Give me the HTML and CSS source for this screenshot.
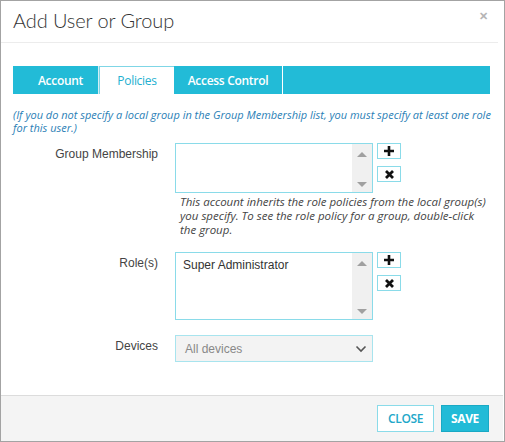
FILE: index.html
```html
<!DOCTYPE html>
<html>
<head>
<meta charset="utf-8">
<link rel="stylesheet" href="styles.css">
</head>
<body>
<div class="dialog">
  <div class="header">
    <h1 class="title">Add User or Group</h1>
    <span class="close-x">&#x2715;</span>
  </div>
  <div class="content">
    <div class="tabs">
      <div class="tab tab-account">Account</div>
      <div class="tab tab-active">Policies</div>
      <div class="tab tab-access">Access Control</div>
      <div class="tab tab-rest"></div>
    </div>
    <p class="note">(If you do not specify a local group in the Group Membership list, you must specify at least one role for this user.)</p>

    <div class="row row-group">
      <div class="label">Group Membership</div>
      <div class="control">
        <div class="listbox lb-group">
          <div class="lb-items"></div>
          <div class="scrollbar"><span class="arr up"></span><span class="arr down"></span></div>
        </div>
        <p class="hint">This account inherits the role policies from the local group(s) you specify. To see the role policy for a group, double-click the group.</p>
      </div>
      <div class="btns">
        <div class="sbtn"><svg width="12" height="12" viewBox="0 0 12 12"><path d="M6 1v10M1 6h10" stroke="#111" stroke-width="2.6"/></svg></div>
        <div class="sbtn"><svg width="11" height="11" viewBox="0 0 11 11"><path d="M2 2l7 7M9 2l-7 7" stroke="#111" stroke-width="2.8"/></svg></div>
      </div>
    </div>

    <div class="row row-role">
      <div class="label">Role(s)</div>
      <div class="control">
        <div class="listbox lb-role">
          <div class="lb-items"><div class="item">Super Administrator</div></div>
          <div class="scrollbar"><span class="arr up"></span><span class="arr down"></span></div>
        </div>
      </div>
      <div class="btns">
        <div class="sbtn"><svg width="12" height="12" viewBox="0 0 12 12"><path d="M6 1v10M1 6h10" stroke="#111" stroke-width="2.6"/></svg></div>
        <div class="sbtn"><svg width="11" height="11" viewBox="0 0 11 11"><path d="M2 2l7 7M9 2l-7 7" stroke="#111" stroke-width="2.8"/></svg></div>
      </div>
    </div>

    <div class="row row-dev">
      <div class="label">Devices</div>
      <div class="control">
        <div class="select"><span>All devices</span><svg width="12" height="8" viewBox="0 0 12 8"><path d="M1.5 1.5l4.5 4.5 4.5-4.5" fill="none" stroke="#555" stroke-width="1.6"/></svg></div>
      </div>
    </div>
  </div>
  <div class="footer">
    <button class="btn btn-close">CLOSE</button>
    <button class="btn btn-save">SAVE</button>
  </div>
</div>
</body>
</html>
```
FILE: styles.css
```css
html, body { margin: 0; padding: 0; background: #fff; }
.dialog {
  width: 505px; height: 442px; box-sizing: border-box;
  border: 1px solid #a3a3a3; display: flex; flex-direction: column;
  font-family: "Open Sans", sans-serif; background: #fff;
}
.header {
  height: 42px; box-sizing: border-box; display: flex; align-items: center;
  justify-content: space-between; padding: 0 12px 0 12px;
  border-bottom: 1px solid #ececec; margin-right: 6px;
}
.title {
  margin: 0; font-family: "Lato", sans-serif; font-weight: 300; font-size: 20px;
  color: #333; letter-spacing: -0.1px; position: relative; top: -2px;
}
.close-x { color: #b5b5b5; font-size: 11px; font-weight: 700; position: relative; top: -6px; right: -2px; }
.content { flex: 1; padding: 23px 14px 0 12px; }
.tabs { display: flex; height: 28px; }
.tab {
  box-sizing: border-box; height: 28px; background: #22bbd7; color: #fff;
  font-size: 12px; font-weight: 600; display: flex; align-items: center; justify-content: center;
  letter-spacing: -0.3px;
}
.tab-account { width: 86px; padding-left: 10px; border-right: 1px solid #d4eff6; }
.tab-active { width: 75px; background: #fff; color: #22b0d0; font-weight: 400; border-top: 1px solid #7fd6e6; border-left: 1px solid #7fd6e6; }
.tab-access { width: 109px; border-right: 1px solid #fff; }
.tab-rest { flex: 1; }
.note {
  margin: 15px -6px 0 0; font-size: 11px; line-height: 12.5px; font-style: italic; color: #2a80b6;
  letter-spacing: 0;
}
.row { display: flex; align-items: flex-start; }
.label {
  width: 145px; text-align: right; font-family: "Liberation Sans", Arial, sans-serif; font-size: 12px;
  color: #444; padding-top: 4px; margin-right: 17px;
}
.control { width: 198px; }
.row-group { margin-top: 9px; }
.row-role { margin-top: 15px; }
.row-dev { margin-top: 15px; }
.listbox {
  box-sizing: border-box; border: 1px solid #8adbe9; display: flex; background: #fff;
}
.lb-group { height: 50px; }
.lb-role { height: 68px; }
.lb-items { flex: 1; }
.item { font-family: "Liberation Sans", Arial, sans-serif; font-size: 12px; color: #333; padding: 5px 0 0 7px; }
.scrollbar { width: 20px; background: #f0f0f0; display: flex; flex-direction: column; justify-content: space-between; align-items: center; padding: 8px 0 5px; box-sizing: border-box; }
.arr { width: 0; height: 0; border-left: 5px solid transparent; border-right: 5px solid transparent; }
.arr.up { border-bottom: 5px solid #a0a0a0; }
.arr.down { border-top: 5px solid #a0a0a0; }
.hint {
  margin: 2px 0 0 5px; width: 310px; font-size: 11.5px; line-height: 14px; font-style: italic; color: #444;
}
.btns { display: flex; flex-direction: column; gap: 7px; margin-left: 4px; }
.sbtn {
  box-sizing: border-box; width: 24px; height: 16px; border: 1px solid #8adbe9; background: #fff;
  display: flex; align-items: center; justify-content: center;
}
.select {
  box-sizing: border-box; height: 27px; border: 1px solid #a8e4ee; background: #f3f3f3;
  display: flex; align-items: center; justify-content: space-between; padding: 0 5px 0 9px;
  font-family: "Liberation Sans", Arial, sans-serif; font-size: 12px; color: #888;
}
.footer {
  height: 46px; box-sizing: border-box; background: #f4f4f4; border-top: 1px solid #dcdcdc;
  display: flex; justify-content: flex-end; align-items: center; padding: 0 14px 0 0; gap: 7px;
  margin-right: 1px;
}
.btn {
  height: 27px; box-sizing: border-box; font-family: "Open Sans", sans-serif; font-size: 12px;
  font-weight: 600; letter-spacing: -0.4px; cursor: pointer; padding: 0;
}
.btn-close { width: 57px; background: #fff; border: 1px solid #8adbe9; color: #22a7c9; }
.btn-save { width: 48px; background: #22bbd7; border: 1px solid #1aa9c4; color: #fff; font-weight: 700; }
```
